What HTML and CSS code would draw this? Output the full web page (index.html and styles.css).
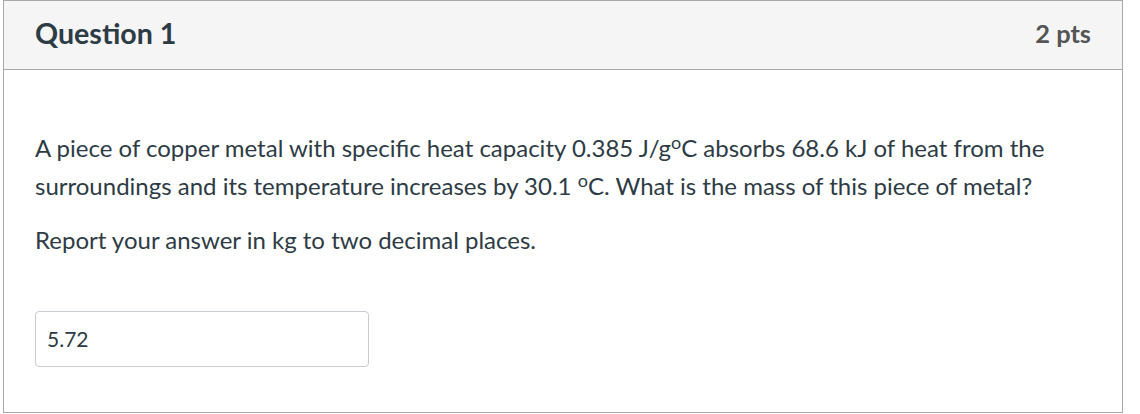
FILE: index.html
```html
<!DOCTYPE html>
<html>
<head>
<meta charset="utf-8">
<link rel="stylesheet" href="styles.css">
</head>
<body>
<div class="question">
  <div class="header">
    <span class="name">Question 1</span>
    <span class="pts">2 pts</span>
  </div>
  <div class="content">
    <p class="text">A piece of copper metal with specific heat capacity 0.385 J/g<sup>o</sup>C absorbs 68.6 kJ of heat from the surroundings and its temperature increases by 30.1 <sup>o</sup>C. What is the mass of this piece of metal?</p>
    <p class="text">Report your answer in kg to two decimal places.</p>
    <div class="answer">
      <input class="field" type="text" value="5.72">
    </div>
  </div>
</div>
</body>
</html>
```
FILE: styles.css
```css
html, body {
  margin: 0;
  padding: 0;
  background: #fff;
}
body {
  font-family: Lato, "Liberation Sans", sans-serif;
  color: #2d3b45;
}
.question {
  margin-left: 3px;
  width: 1120px;
  height: 413px;
  box-sizing: border-box;
  border: 1px solid #a9a9a9;
}
.header {
  display: flex;
  justify-content: space-between;
  align-items: center;
  height: 69px;
  box-sizing: border-box;
  padding: 0 31px 4px 31px;
  background: #f5f5f5;
  border-bottom: 1px solid #a9a9a9;
}
.name {
  font-weight: 700;
  font-size: 28.6px;
  color: #2d3b45;
}
.pts {
  font-weight: 700;
  font-size: 25.4px;
  color: #555555;
}
.content {
  padding: 59px 31px 0 31px;
}
.text {
  margin: 0 0 16px 0;
  font-size: 24px;
  line-height: 38px;
}
.text sup {
  font-size: 0.75em;
  line-height: 0;
  vertical-align: 0.45em;
}
.answer {
  padding-top: 36px;
}
.field {
  display: block;
  box-sizing: border-box;
  width: 334px;
  height: 56px;
  margin: 0;
  padding: 0 11px 2px 11px;
  border: 1px solid #c7cdd1;
  border-radius: 4px;
  font-family: Lato, "Liberation Sans", sans-serif;
  font-size: 21px;
  color: #2d3b45;
  background: #fff;
}
```
